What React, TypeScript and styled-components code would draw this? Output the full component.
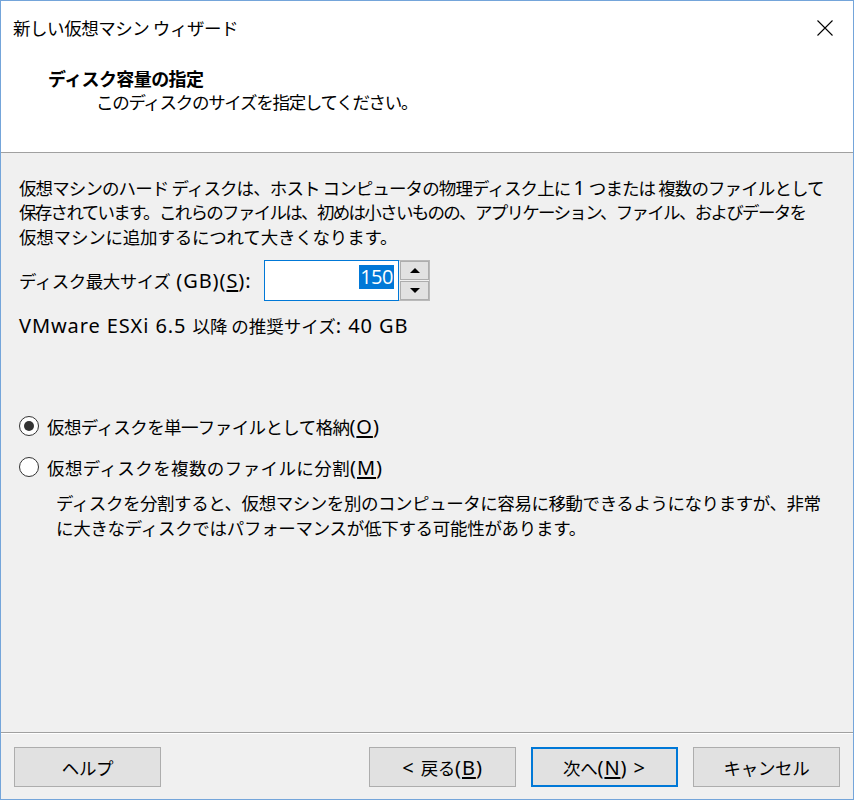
import styled, { createGlobalStyle } from 'styled-components';

const GlobalStyle = createGlobalStyle`
  html, body {
    margin: 0;
    padding: 0;
    background: #f0f0f0;
  }
  body {
    font-family: "Noto Sans CJK JP", "Noto Sans", sans-serif;
    color: #000;
  }
`;

const Window = styled.div`
  width: 854px;
  height: 800px;
  box-sizing: border-box;
  border: 1px solid #74a5da;
  background: #f0f0f0;
  display: flex;
  flex-direction: column;
  font-size: 17.5px;
`;

const Header = styled.div`
  background: #fff;
  height: 152px;
  box-sizing: border-box;
  border-bottom: 1px solid #a0a0a0;
`;

const TitleBar = styled.div`
  height: 54px;
  display: flex;
  align-items: center;
  justify-content: space-between;
  padding: 0 20px 0 12px;
`;

const Title = styled.span`
  line-height: 24px;
  letter-spacing: -0.45px;
`;

const CloseIcon = styled.svg`
  width: 16px;
  height: 16px;
  display: block;
`;

const Heading = styled.div`
  padding: 11px 0 0 47px;
  font-weight: bold;
  font-size: 18px;
  line-height: 24px;
  letter-spacing: -0.6px;
`;

const SubHeading = styled.div`
  padding-left: 95px;
  line-height: 24px;
  letter-spacing: -1.3px;
`;

const Body = styled.div`
  flex: 1;
  padding: 23px 0 0 18px;
`;

const Lines = styled.div<{ $indent?: number }>`
  padding-left: ${(p) => p.$indent ?? 0}px;
`;

const Line = styled.div<{ $tracking?: number }>`
  line-height: 24.4px;
  white-space: nowrap;
  letter-spacing: ${(p) => p.$tracking ?? 0}px;
`;

const Latin = styled.span`
  font-family: "Noto Sans", "Noto Sans CJK JP", sans-serif;
  font-size: 20px;
  letter-spacing: 0.9px;
`;

const SizeRow = styled.div`
  display: flex;
  align-items: center;
  margin-top: 11px;
  height: 41px;
`;

const Label = styled.span`
  width: 245px;
  white-space: nowrap;
  letter-spacing: -0.5px;
`;

const Spin = styled.div`
  display: flex;
  height: 41px;
`;

const Field = styled.div`
  width: 135px;
  box-sizing: border-box;
  border: 1px solid #0078d7;
  background: #fff;
  display: flex;
  align-items: center;
  justify-content: flex-end;
  padding-right: 4px;
`;

const Selected = styled.span`
  background: #0078d7;
  color: #fff;
  font-family: "Open Sans", "Noto Sans", sans-serif;
  font-size: 20px;
  line-height: 24px;
  letter-spacing: -0.5px;
  padding: 0 1px;
  margin-top: -8px;
`;

const Arrows = styled.div`
  width: 31px;
  box-sizing: border-box;
  border: 1px solid #b9b9b9;
  border-left: none;
  display: flex;
  flex-direction: column;
  gap: 1px;
  background: #f0f0f0;
`;

const ArrowButton = styled.div`
  flex: 1;
  background: #e1e1e1;
  border: 1px solid #adadad;
  margin-left: 1px;
  display: flex;
  align-items: center;
  justify-content: center;
`;

const Triangle = styled.div<{ $up?: boolean }>`
  width: 0;
  height: 0;
  border-left: 5px solid transparent;
  border-right: 5px solid transparent;
  ${(p) => (p.$up ? 'border-bottom: 5px solid #000;' : 'border-top: 5px solid #000;')}
`;

const Recommend = styled.div`
  margin-top: 13px;
  line-height: 24px;
  white-space: nowrap;
`;

const RadioRow = styled.label<{ $gap: number; $tracking: number }>`
  display: flex;
  align-items: center;
  gap: 8px;
  height: 24px;
  margin-top: ${(p) => p.$gap}px;
  white-space: nowrap;
  letter-spacing: ${(p) => p.$tracking}px;
`;

const RadioCircle = styled.span<{ $checked?: boolean }>`
  width: 20px;
  height: 20px;
  box-sizing: border-box;
  border-radius: 50%;
  border: 1px solid #333;
  background: #fff;
  display: flex;
  align-items: center;
  justify-content: center;
  &::after {
    content: '';
    display: ${(p) => (p.$checked ? 'block' : 'none')};
    width: 10px;
    height: 10px;
    border-radius: 50%;
    background: #333;
  }
`;

const Note = styled(Lines)`
  margin-top: 12px;
`;

const Key = styled.span`
  text-decoration: underline;
  text-underline-offset: 2px;
`;

const Footer = styled.div`
  height: 67px;
  box-sizing: border-box;
  border-top: 1px solid #a0a0a0;
  box-shadow: inset 0 1px 0 #fff;
  display: flex;
  align-items: flex-start;
  padding: 14px 13px 0 13px;
  gap: 15px;
`;

const Button = styled.div<{ $default?: boolean; $push?: boolean }>`
  width: 147px;
  height: 40px;
  box-sizing: border-box;
  background: #e1e1e1;
  border: ${(p) => (p.$default ? '2px solid #0078d7' : '1px solid #adadad')};
  display: flex;
  align-items: center;
  justify-content: center;
  white-space: pre;
  letter-spacing: -0.3px;
  ${(p) => (p.$push ? 'margin-left: auto;' : '')}
`;

export default function App() {
  return (
    <>
      <GlobalStyle />
      <Window>
        <Header>
          <TitleBar>
            <Title>新しい仮想マシン ウィザード</Title>
            <CloseIcon viewBox="0 0 16 16">
              <path d="M0.5 0.5 L15.5 15.5 M15.5 0.5 L0.5 15.5" stroke="#000" strokeWidth="1.1" fill="none" />
            </CloseIcon>
          </TitleBar>
          <Heading>ディスク容量の指定</Heading>
          <SubHeading>このディスクのサイズを指定してください。</SubHeading>
        </Header>

        <Body>
          <Lines>
            <Line $tracking={-0.9}>
              仮想マシンのハード ディスクは、ホスト コンピュータの物理ディスク上に <Latin>1</Latin> つまたは 複数のファイルとして
            </Line>
            <Line $tracking={-1.7}>
              保存されています。これらのファイルは、初めは小さいものの、アプリケーション、ファイル、およびデータを
            </Line>
            <Line $tracking={-0.2}>仮想マシンに追加するにつれて大きくなります。</Line>
          </Lines>

          <SizeRow>
            <Label>
              ディスク最大サイズ
              <Latin>
                {'\u00a0(GB)('}
                <Key>S</Key>
                {'):'}
              </Latin>
            </Label>
            <Spin>
              <Field>
                <Selected>150</Selected>
              </Field>
              <Arrows>
                <ArrowButton>
                  <Triangle $up />
                </ArrowButton>
                <ArrowButton>
                  <Triangle />
                </ArrowButton>
              </Arrows>
            </Spin>
          </SizeRow>

          <Recommend>
            <Latin>{'VMware ESXi 6.5\u00a0'}</Latin>以降 の推奨サイズ<Latin>: 40 GB</Latin>
          </Recommend>

          <RadioRow $gap={76} $tracking={-0.6}>
            <RadioCircle $checked />
            <span>
              仮想ディスクを単一ファイルとして格納
              <Latin>
                (<Key>O</Key>)
              </Latin>
            </span>
          </RadioRow>
          <RadioRow $gap={17} $tracking={0.4}>
            <RadioCircle />
            <span>
              仮想ディスクを複数のファイルに分割
              <Latin>
                (<Key>M</Key>)
              </Latin>
            </span>
          </RadioRow>
          <Note $indent={37}>
            <Line $tracking={-0.45}>
              ディスクを分割すると、仮想マシンを別のコンピュータに容易に移動できるようになりますが、非常
            </Line>
            <Line $tracking={-0.3}>に大きなディスクではパフォーマンスが低下する可能性があります。</Line>
          </Note>
        </Body>

        <Footer>
          <Button>ヘルプ</Button>
          <Button $push>
            <Latin>{'<\u00a0'}</Latin>戻る
            <Latin>
              (<Key>B</Key>)
            </Latin>
          </Button>
          <Button $default>
            次へ
            <Latin>
              (<Key>N</Key>){'\u00a0>'}
            </Latin>
          </Button>
          <Button>キャンセル</Button>
        </Footer>
      </Window>
    </>
  );
}
